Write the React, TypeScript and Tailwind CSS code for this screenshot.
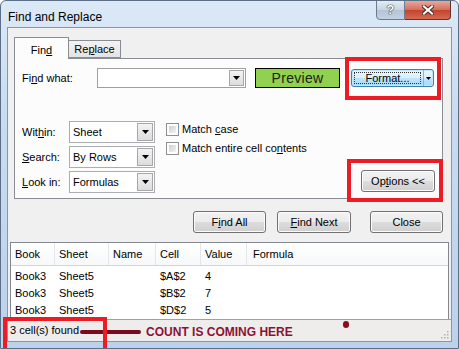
import React from "react";

const btnBg =
  "bg-[linear-gradient(#f2f2f2_0%,#ebebeb_50%,#dddddd_50%,#cfcfcf_100%)] border border-[#707070] rounded-[3px] shadow-[inset_0_0_0_1px_#fbfbfb]";

function Arrow() {
  return (
    <svg width="7" height="4" viewBox="0 0 7 4">
      <polygon points="0,0 7,0 3.5,4" fill="#000" />
    </svg>
  );
}

function Combo({ value, w }: { value: string; w: string }) {
  return (
    <div className={`${w} h-[22px] flex border border-[#abadb3] bg-white`}>
      <span className="flex-1 pl-[3px] leading-[20px]">{value}</span>
      <div className="m-px w-[16px] flex items-center justify-center border border-[#a7a7a7] bg-[linear-gradient(#f3f3f3,#dcdcdc)]">
        <Arrow />
      </div>
    </div>
  );
}

function Check({ children }: { children: React.ReactNode }) {
  return (
    <div className="flex items-center h-[13px] gap-[3px]">
      <div className="w-[13px] h-[13px] border border-[#8e8f8f] bg-white p-[2px]">
        <div className="w-full h-full bg-[linear-gradient(135deg,#cbcfd5,#f4f4f4)]" />
      </div>
      <span>{children}</span>
    </div>
  );
}

const rows = [
  ["Book3", "Sheet5", "", "$A$2", "4"],
  ["Book3", "Sheet5", "", "$B$2", "7"],
  ["Book3", "Sheet5", "", "$D$2", "5"],
];

const cols = ["w-[44px]", "w-[54px]", "w-[47px]", "w-[45px]", "w-[46px]"];

export default function App() {
  return (
    <div className="relative w-[459px] h-[349px] overflow-hidden flex flex-col text-[11px] text-black font-['Liberation_Sans',Arial,sans-serif] rounded-t-[6px] border border-[#5d6f86] bg-[linear-gradient(#dce9f7,#c9dcf1_30%,#bcd2eb)]">
      {/* Title bar */}
      <div className="h-[26px] flex items-start shrink-0">
        <span className="ml-[7px] mt-[7px] text-[12px]">Find and Replace</span>
        <div className="ml-auto mr-[7px] -mt-px flex">
          <div className="w-[29px] h-[20px] flex items-center justify-center rounded-bl-[4px] border border-[#6b7c8e] bg-[linear-gradient(#e4ecf4,#c6d4e2_50%,#b4c4d5_51%,#c3d2e2)] text-white font-bold text-[13px] [text-shadow:0_0_1px_#333,0_0_1px_#333,0_0_1px_#333]">
            ?
          </div>
          <div className="w-[46px] h-[20px] flex items-center justify-center rounded-br-[4px] border border-l-0 border-[#6b2e27] bg-[linear-gradient(#e6a89d,#d66d5b_50%,#c2432e_51%,#d46a50)]">
            <svg width="12" height="10" viewBox="0 0 12 10">
              <path d="M2 1.5 L10 8.5 M10 1.5 L2 8.5" stroke="#4a2520" strokeWidth="4" strokeLinecap="square" />
              <path d="M2 1.5 L10 8.5 M10 1.5 L2 8.5" stroke="#fff" strokeWidth="2.2" strokeLinecap="square" />
            </svg>
          </div>
        </div>
      </div>

      {/* Client area */}
      <div className="ml-[6px] w-[445px] h-[315px] shrink-0 flex flex-col border border-[#8696ab] bg-[#f0f0f0]">
        {/* Tabs */}
        <div className="mt-[9px] ml-[6px] h-[21px] flex items-end relative z-10">
          <div className="w-[55px] h-[22px] -mb-px bg-[#fcfcfc] border border-b-0 border-[#898c95] flex items-start justify-center pt-[4px]">
            <span>
              Fin<u>d</u>
            </span>
          </div>
          <div className="w-[52px] h-[18px] border border-l-0 border-[#898c95] bg-[linear-gradient(#f3f3f3,#e3e3e3)] flex items-center justify-center">
            <span>
              Re<u>p</u>lace
            </span>
          </div>
        </div>

        {/* Panel */}
        <div className="ml-[6px] w-[429px] h-[142px] border border-[#898c95] bg-[#fcfcfc] px-[7px] pt-[9px] flex flex-col">
          <div className="flex items-center h-[20px]">
            <span className="w-[75px]">
              Fi<u>n</u>d what:
            </span>
            <div className="w-[149px] h-[20px] flex border border-[#a0a0a0] bg-white">
              <span className="flex-1" />
              <div className="m-px w-[15px] flex items-center justify-center border border-[#a7a7a7] bg-[linear-gradient(#f3f3f3,#dcdcdc)]">
                <Arrow />
              </div>
            </div>
            <div className="ml-[9px] w-[85px] h-[20px] bg-[#92d050] border border-black flex items-center justify-center text-[14px] tracking-[0.3px] text-[#1b2410]">
              Preview
            </div>
            <div className="ml-[11px] w-[83px] h-[18px] flex rounded-[3px] border border-[#3c7fb1] bg-[linear-gradient(#eaf6fd,#d9f0fc_50%,#bee6fd_50%,#a7d9f5)] shadow-[inset_0_0_0_1px_#c5e6fa]">
              <div className="flex-1 m-[2px] border border-dotted border-[#333] flex items-center justify-center text-[11px]">
                Format...
              </div>
              <div className="w-[10px] border-l border-[#8ab3cf] flex items-center justify-center">
                <svg width="5" height="3" viewBox="0 0 5 3">
                  <polygon points="0,0 5,0 2.5,3" fill="#000" />
                </svg>
              </div>
            </div>
          </div>

          <div className="mt-[33px] flex">
            <div className="flex flex-col gap-[3px]">
              {[
                [<>Wit<u>h</u>in:</>, "Sheet"],
                [<><u>S</u>earch:</>, "By Rows"],
                [<><u>L</u>ook in:</>, "Formulas"],
              ].map((r, i) => (
                <div key={i} className="flex items-center">
                  <span className="w-[47px]">{r[0]}</span>
                  <Combo value={r[1] as string} w="w-[86px]" />
                </div>
              ))}
            </div>
            <div className="ml-[11px] mt-[2px] flex flex-col gap-[6px]">
              <Check>
                Match <u>c</u>ase
              </Check>
              <Check>
                Match entire cell co<u>n</u>tents
              </Check>
            </div>
            <div className={`ml-auto self-end mb-[1px] w-[74px] h-[22px] flex items-center justify-center ${btnBg}`}>
              <span>
                Op<u>t</u>ions &lt;&lt;
              </span>
            </div>
          </div>
        </div>

        {/* Buttons */}
        <div className="mt-[12px] mr-[8px] flex justify-end h-[22px]">
          <div className={`w-[73px] flex items-center justify-center ${btnBg}`}>
            <span>
              F<u>i</u>nd All
            </span>
          </div>
          <div className={`ml-[11px] w-[74px] flex items-center justify-center ${btnBg}`}>
            <span>
              <u>F</u>ind Next
            </span>
          </div>
          <div className={`ml-[19px] w-[73px] flex items-center justify-center ${btnBg}`}>
            Close
          </div>
        </div>

        {/* Results list */}
        <div className="mt-[9px] mx-[2px] h-[77px] border border-b-0 border-[#828790] bg-white flex flex-col">
          <div className="h-[23px] flex border-b border-[#d5d5d5] bg-[linear-gradient(#ffffff,#f7f8fa)]">
            {["Book", "Sheet", "Name", "Cell", "Value"].map((h, i) => (
              <div key={h} className={`${cols[i]} border-r border-[#e4e6ea] pl-[4px] flex items-center`}>
                {h}
              </div>
            ))}
            <div className="flex-1 pl-[6px] flex items-center">Formula</div>
          </div>
          <div className="pt-[2px] flex flex-col">
            {rows.map((r, i) => (
              <div key={i} className="h-[17px] flex items-center">
                {r.map((c, j) => (
                  <div key={j} className={`${cols[j]} pl-[4px]`}>
                    {c}
                  </div>
                ))}
              </div>
            ))}
          </div>
        </div>

        {/* Status bar */}
        <div className="flex-1 flex items-center border-t border-[#a0a0a0] bg-[#efecec] relative">
          <span className="ml-[2px]">3 cell(s) found</span>
          <div className="ml-[1px] mt-[3px] w-[61px] h-[4px] rounded-full bg-[#7a0a1f]" />
          <span className="ml-[5px] mt-[3px] text-[12px] font-bold text-[#8a1236]">
            COUNT IS COMING HERE
          </span>
          <svg className="absolute right-[2px] bottom-[2px]" width="10" height="10" viewBox="0 0 10 10">
            {[
              [8, 2],
              [8, 5],
              [5, 5],
              [8, 8],
              [5, 8],
              [2, 8],
            ].map(([x, y], i) => (
              <rect key={i} x={x} y={y} width="1.5" height="1.5" fill="#b0b0b0" />
            ))}
          </svg>
        </div>
      </div>

      {/* Annotations */}
      <div className="absolute left-[344px] top-[56px] w-[96px] h-[43px] border-[4px] border-[#ed1c24]" />
      <div className="absolute left-[346px] top-[158px] w-[96px] h-[43px] border-[4px] border-[#ed1c24]" />
      <div className="absolute left-[2px] top-[316px] w-[104px] h-[40px] border-[4px] border-[#ed1c24]" />
      <div className="absolute left-[342px] top-[320px] w-[6px] h-[7px] rounded-full bg-[#8b0b1f]" />
    </div>
  );
}
